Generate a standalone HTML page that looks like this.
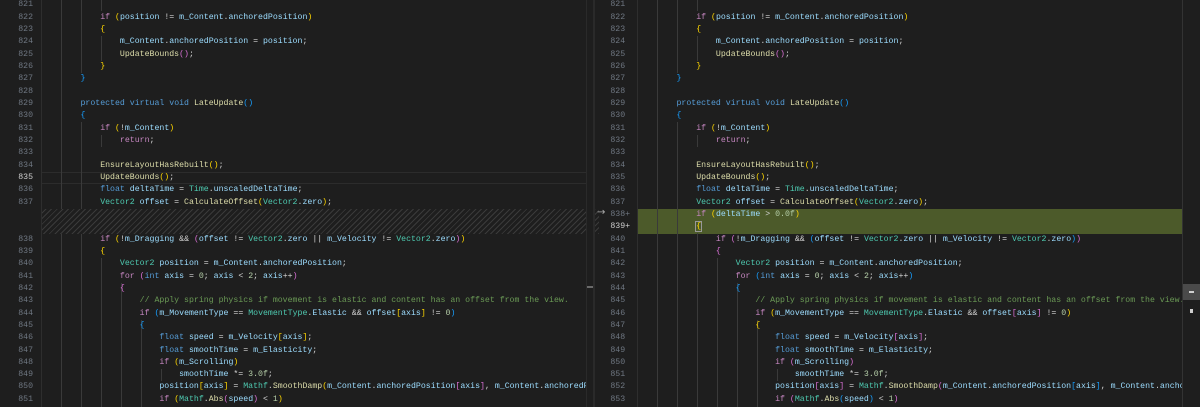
<!DOCTYPE html>
<html><head><meta charset="utf-8"><style>
html,body{margin:0;padding:0;background:#1e1e1e;width:1200px;height:407px;overflow:hidden}
.pane{position:absolute;top:0;height:407px;overflow:hidden}
pre{margin:0;font-family:"Liberation Mono",monospace;font-size:8.23px;line-height:12.33px;color:#d4d4d4;position:absolute;top:-0.7px;white-space:pre}
.gut{color:#6e7681;text-align:right}
k{color:#569cd6}c{color:#c586c0}v{color:#9cdcfe}f{color:#dcdcaa}t{color:#4ec9b0}
y{color:#ffd700}pp{color:#da70d6}bb{color:#179fff}m{color:#6a9955}n{color:#b5cea8}
.g{position:absolute;width:1px;background:#3a3a3a}
.hatch{position:absolute;background:repeating-linear-gradient(-45deg,#3a3a3a 0 1px,#1e1e1e 1px 4px)}
</style></head><body>
<!-- LEFT PANE -->
<div class="pane" style="left:0;width:593px">
<div class="hatch" style="left:41px;top:208.9px;width:552px;height:24.7px"></div>
<div style="position:absolute;left:41px;top:171.9px;width:545px;height:12.3px;border-top:1px solid #2c2c2c;border-bottom:1px solid #2c2c2c;box-sizing:border-box"></div>
<div class="g" style="left:41px;top:0;height:407px;background:#2e2e2e"></div>
<div class="g" style="left:61px;top:0;height:209px"></div><div class="g" style="left:61px;top:234px;height:173px"></div>
<div class="g" style="left:81px;top:0;height:73px"></div><div class="g" style="left:81px;top:122px;height:87px"></div><div class="g" style="left:81px;top:234px;height:173px"></div>
<div class="g" style="left:101px;top:0;height:11px"></div><div class="g" style="left:101px;top:36px;height:25px"></div><div class="g" style="left:101px;top:135px;height:12px"></div><div class="g" style="left:101px;top:258px;height:149px"></div>
<div class="g" style="left:121px;top:283px;height:124px"></div>
<div class="g" style="left:141px;top:320px;height:87px"></div>
<div class="g" style="left:161px;top:369px;height:12px"></div>
<pre class="gut" style="left:0;width:33px">821
822
823
824
825
826
827
828
829
830
831
832
833
834
<span style="color:#cccccc">835</span>
836
837


838
839
840
841
842
843
844
845
846
847
848
849
850
851</pre>
<pre style="left:41px">

            <c>if</c> <y>(</y><v>position</v> != <v>m_Content</v>.<v>anchoredPosition</v><y>)</y>
            <y>{</y>
                <v>m_Content</v>.<v>anchoredPosition</v> = <v>position</v>;
                <f>UpdateBounds</f><pp>()</pp>;
            <y>}</y>
        <bb>}</bb>

        <k>protected</k> <k>virtual</k> <k>void</k> <f>LateUpdate</f><bb>()</bb>
        <bb>{</bb>
            <c>if</c> <y>(</y>!<v>m_Content</v><y>)</y>
                <c>return</c>;

            <f>EnsureLayoutHasRebuilt</f><y>()</y>;
            <f>UpdateBounds</f><y>()</y>;
            <k>float</k> <v>deltaTime</v> = <t>Time</t>.<v>unscaledDeltaTime</v>;
            <t>Vector2</t> <v>offset</v> = <f>CalculateOffset</f><y>(</y><t>Vector2</t>.<v>zero</v><y>)</y>;


            <c>if</c> <y>(</y>!<v>m_Dragging</v> &amp;&amp; <pp>(</pp><v>offset</v> != <t>Vector2</t>.<v>zero</v> || <v>m_Velocity</v> != <t>Vector2</t>.<v>zero</v><pp>)</pp><y>)</y>
            <y>{</y>
                <t>Vector2</t> <v>position</v> = <v>m_Content</v>.<v>anchoredPosition</v>;
                <c>for</c> <pp>(</pp><k>int</k> <v>axis</v> = <n>0</n>; <v>axis</v> &lt; <n>2</n>; <v>axis</v>++<pp>)</pp>
                <pp>{</pp>
                    <m>// Apply spring physics if movement is elastic and content has an offset from the view.</m>
                    <c>if</c> <bb>(</bb><v>m_MovementType</v> == <t>MovementType</t>.<v>Elastic</v> &amp;&amp; <v>offset</v><y>[</y><v>axis</v><y>]</y> != <n>0</n><bb>)</bb>
                    <bb>{</bb>
                        <k>float</k> <v>speed</v> = <v>m_Velocity</v><y>[</y><v>axis</v><y>]</y>;
                        <k>float</k> <v>smoothTime</v> = <v>m_Elasticity</v>;
                        <c>if</c> <y>(</y><v>m_Scrolling</v><y>)</y>
                            <v>smoothTime</v> *= <n>3.0f</n>;
                        <v>position</v><y>[</y><v>axis</v><y>]</y> = <t>Mathf</t>.<f>SmoothDamp</f><y>(</y><v>m_Content</v>.<v>anchoredPosition</v><pp>[</pp><v>axis</v><pp>]</pp>, <v>m_Content</v>.<v>anchoredPosition</v><pp>[</pp><v>axis</v><pp>]</pp>
                        <c>if</c> <y>(</y><t>Mathf</t>.<f>Abs</f><pp>(</pp><v>speed</v><pp>)</pp> &lt; <n>1</n><y>)</y></pre>
<div style="position:absolute;left:586px;top:0;width:7px;height:407px;background:#1e1e1e;border-left:1px solid #2a2a2a"></div>
<div style="position:absolute;left:587px;top:286px;width:6px;height:2px;background:#6a6a6a"></div>
</div>
<div style="position:absolute;left:593px;top:0;width:2px;height:407px;background:#2a2a2a"></div>
<!-- RIGHT PANE -->
<div class="pane" style="left:595px;width:605px">
<div class="hatch" style="left:0;top:208.9px;width:4px;height:24.7px"></div>
<div style="position:absolute;left:42px;top:208.9px;width:545px;height:24.7px;background:#4c5a2a"></div>
<div class="g" style="left:42px;top:0;height:407px;background:#2e2e2e"></div>
<div class="g" style="left:62px;top:0;height:407px"></div>
<div class="g" style="left:82px;top:0;height:73px"></div><div class="g" style="left:82px;top:122px;height:285px"></div>
<div class="g" style="left:102px;top:0;height:11px"></div><div class="g" style="left:102px;top:36px;height:25px"></div><div class="g" style="left:102px;top:135px;height:12px"></div><div class="g" style="left:102px;top:233px;height:174px"></div>
<div class="g" style="left:122px;top:258px;height:149px"></div>
<div class="g" style="left:142px;top:283px;height:124px"></div>
<div class="g" style="left:162px;top:320px;height:87px"></div>
<div class="g" style="left:182px;top:369px;height:12px"></div>
<div style="position:absolute;left:2px;top:207px;color:#aaaaaa;font:10px 'DejaVu Sans',sans-serif">→</div>
<pre class="gut" style="left:0;width:40px">821  
822  
823  
824  
825  
826  
827  
828  
829  
830  
831  
832  
833  
834  
835  
836  
837  
838+ 
<span style="color:#cccccc">839+ </span>
840  
841  
842  
843  
844  
845  
846  
847  
848  
849  
850  
851  
852  
853  </pre>
<pre style="left:42px">

            <c>if</c> <y>(</y><v>position</v> != <v>m_Content</v>.<v>anchoredPosition</v><y>)</y>
            <y>{</y>
                <v>m_Content</v>.<v>anchoredPosition</v> = <v>position</v>;
                <f>UpdateBounds</f><pp>()</pp>;
            <y>}</y>
        <bb>}</bb>

        <k>protected</k> <k>virtual</k> <k>void</k> <f>LateUpdate</f><bb>()</bb>
        <bb>{</bb>
            <c>if</c> <y>(</y>!<v>m_Content</v><y>)</y>
                <c>return</c>;

            <f>EnsureLayoutHasRebuilt</f><y>()</y>;
            <f>UpdateBounds</f><y>()</y>;
            <k>float</k> <v>deltaTime</v> = <t>Time</t>.<v>unscaledDeltaTime</v>;
            <t>Vector2</t> <v>offset</v> = <f>CalculateOffset</f><y>(</y><t>Vector2</t>.<v>zero</v><y>)</y>;
            <c>if</c> <y>(</y><v>deltaTime</v> &gt; <n>0.0f</n><y>)</y>
            <y style="outline:1px solid #999">{</y>
                <c>if</c> <pp>(</pp>!<v>m_Dragging</v> &amp;&amp; <bb>(</bb><v>offset</v> != <t>Vector2</t>.<v>zero</v> || <v>m_Velocity</v> != <t>Vector2</t>.<v>zero</v><bb>)</bb><pp>)</pp>
                <pp>{</pp>
                    <t>Vector2</t> <v>position</v> = <v>m_Content</v>.<v>anchoredPosition</v>;
                    <c>for</c> <bb>(</bb><k>int</k> <v>axis</v> = <n>0</n>; <v>axis</v> &lt; <n>2</n>; <v>axis</v>++<bb>)</bb>
                    <bb>{</bb>
                        <m>// Apply spring physics if movement is elastic and content has an offset from the view.</m>
                        <c>if</c> <y>(</y><v>m_MovementType</v> == <t>MovementType</t>.<v>Elastic</v> &amp;&amp; <v>offset</v><pp>[</pp><v>axis</v><pp>]</pp> != <n>0</n><y>)</y>
                        <y>{</y>
                            <k>float</k> <v>speed</v> = <v>m_Velocity</v><pp>[</pp><v>axis</v><pp>]</pp>;
                            <k>float</k> <v>smoothTime</v> = <v>m_Elasticity</v>;
                            <c>if</c> <pp>(</pp><v>m_Scrolling</v><pp>)</pp>
                                <v>smoothTime</v> *= <n>3.0f</n>;
                            <v>position</v><pp>[</pp><v>axis</v><pp>]</pp> = <t>Mathf</t>.<f>SmoothDamp</f><pp>(</pp><v>m_Content</v>.<v>anchoredPosition</v><bb>[</bb><v>axis</v><bb>]</bb>, <v>m_Content</v>.<v>anchoredPosition</v><bb>[</bb><v>axis</v><bb>]</bb>
                            <c>if</c> <pp>(</pp><t>Mathf</t>.<f>Abs</f><bb>(</bb><v>speed</v><bb>)</bb> &lt; <n>1</n><pp>)</pp></pre>
<div style="position:absolute;left:587px;top:0;width:18px;height:407px;background:#1e1e1e;border-left:1px solid #333"></div>
<div style="position:absolute;left:588px;top:284px;width:17px;height:16px;background:#4a4a4a"></div>
<div style="position:absolute;left:594px;top:291px;width:5px;height:2px;background:#cfcfcf"></div>
<div style="position:absolute;left:595px;top:309px;width:3px;height:4px;background:#cfcfcf"></div>
</div>
</body></html>
